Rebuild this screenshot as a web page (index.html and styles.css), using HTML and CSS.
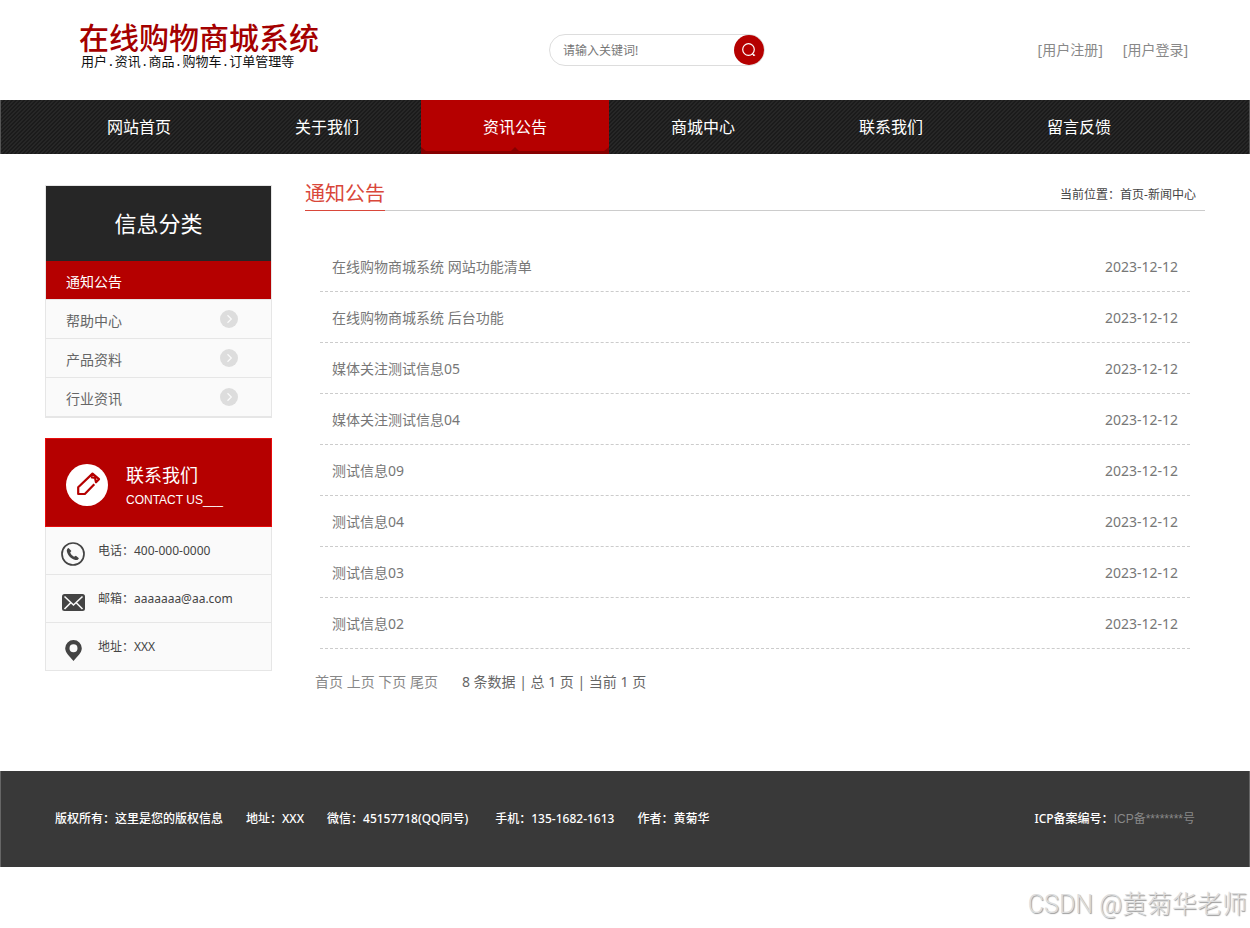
FILE: index.html
```html
<!DOCTYPE html>
<html lang="zh-CN">
<head>
<meta charset="utf-8">
<meta name="viewport" content="width=device-width, initial-scale=1">
<title>在线购物商城系统</title>
<link rel="stylesheet" href="styles.css">
</head>
<body>
<header class="header container">
  <div class="brand">
    <h1 class="brand-name">在线购物商城系统</h1>
    <p class="brand-tag">用户.资讯.商品.购物车.订单管理等</p>
  </div>
  <form class="search">
    <input class="search-input" type="text" placeholder="请输入关键词!" aria-label="请输入关键词">
    <button class="search-button" type="submit" aria-label="搜索">
      <svg width="16" height="16" viewBox="0 0 16 16" fill="none" stroke="#fff" stroke-width="1.2" stroke-linecap="round"><circle cx="7.5" cy="7.5" r="5.8"/><path d="M12.6 13.2h1"/><path d="M11.6 11.8l1 1.4"/></svg>
    </button>
  </form>
  <div class="account">
    <a href="#">[用户注册]</a>
    <a href="#">[用户登录]</a>
  </div>
</header>

<nav class="nav">
  <div class="nav-list container">
    <a class="nav-item" href="#">网站首页</a>
    <a class="nav-item" href="#">关于我们</a>
    <a class="nav-item nav-active" href="#">资讯公告
      <svg class="nav-edge" viewBox="0 0 188 7" preserveAspectRatio="none"><path fill="#870000" d="M0 0l5 4h85l4-4 4 4h85l5-4v7H0z"/></svg>
    </a>
    <a class="nav-item" href="#">商城中心</a>
    <a class="nav-item" href="#">联系我们</a>
    <a class="nav-item" href="#">留言反馈</a>
  </div>
</nav>

<div class="content container">
  <aside class="sidebar">
    <section class="category">
      <h2 class="category-title">信息分类</h2>
      <a class="category-item category-active" href="#">通知公告</a>
      <a class="category-item" href="#">帮助中心
        <svg width="18" height="18" viewBox="0 0 18 18"><circle cx="9" cy="9" r="9" fill="#ddd"/><path d="M7.5 5.2L11.3 9l-3.8 3.8" fill="none" stroke="#fafafa" stroke-width="1.3"/></svg></a>
      <a class="category-item" href="#">产品资料
        <svg width="18" height="18" viewBox="0 0 18 18"><circle cx="9" cy="9" r="9" fill="#ddd"/><path d="M7.5 5.2L11.3 9l-3.8 3.8" fill="none" stroke="#fafafa" stroke-width="1.3"/></svg></a>
      <a class="category-item" href="#">行业资讯
        <svg width="18" height="18" viewBox="0 0 18 18"><circle cx="9" cy="9" r="9" fill="#ddd"/><path d="M7.5 5.2L11.3 9l-3.8 3.8" fill="none" stroke="#fafafa" stroke-width="1.3"/></svg></a>
    </section>
    <section class="contact">
      <div class="contact-head">
        <svg width="42" height="42" viewBox="0 0 42 42"><circle cx="21" cy="21" r="21" fill="#fff"/><path d="M28.3 20.3L18.8 30H12.2V23.2L26.5 9.6L33 15.2L30 18.3L29 14L25 13.2" fill="none" stroke="#b50000" stroke-width="2.2" stroke-linejoin="round"/></svg>
        <div>
          <h2 class="contact-title">联系我们</h2>
          <p class="contact-sub">CONTACT US___</p>
        </div>
      </div>
      <div class="contact-row">
        <svg width="24" height="24" viewBox="0 0 24 24"><circle cx="12" cy="12" r="11" fill="none" stroke="#444" stroke-width="1.7"/><path d="M7.600 6c-1.500.6-2.100 2-1.700 3.600 1 4.200 4.300 7.400 8.500 8.400 1.600.3 2.900-.3 3.500-1.800l-3-2.500-1.900 1c-1.800-.9-3.100-2.300-3.800-4.100l1.200-1.700z" fill="#444"/></svg>
        <span>电话：400-000-0000</span>
      </div>
      <div class="contact-row">
        <svg width="24" height="24" viewBox="0 0 24 24"><rect x="1" y="4" width="23" height="17" rx="2.5" fill="#444"/><path d="M3.500 6.500l9 8.500 9-8.500M3.500 19l6-6M21.500 19l-6-6" fill="none" stroke="#fafafa" stroke-width="1.6"/></svg>
        <span>邮箱：aaaaaaa@aa.com</span>
      </div>
      <div class="contact-row">
        <svg width="24" height="24" viewBox="0 0 24 24"><path fill="#444" fill-rule="evenodd" d="M12.500 2a8.300 8.300 0 0 1 8.300 8.300c0 4.400-4.200 8-8.300 12.700C8.400 18.300 4.200 14.700 4.200 10.300A8.300 8.300 0 0 1 12.500 2zm0 4.300a4 4 0 1 0 0 8 4 4 0 0 0 0-8z"/></svg>
        <span>地址：XXX</span>
      </div>
    </section>
  </aside>

  <main class="main">
    <div class="main-head">
      <h2 class="main-title">通知公告</h2>
      <p class="crumbs">当前位置：<a href="#">首页</a>-<a href="#">新闻中心</a></p>
    </div>
    <ul class="news">
      <li class="news-item"><a href="#">在线购物商城系统 网站功能清单</a><time>2023-12-12</time></li>
      <li class="news-item"><a href="#">在线购物商城系统 后台功能</a><time>2023-12-12</time></li>
      <li class="news-item"><a href="#">媒体关注测试信息05</a><time>2023-12-12</time></li>
      <li class="news-item"><a href="#">媒体关注测试信息04</a><time>2023-12-12</time></li>
      <li class="news-item"><a href="#">测试信息09</a><time>2023-12-12</time></li>
      <li class="news-item"><a href="#">测试信息04</a><time>2023-12-12</time></li>
      <li class="news-item"><a href="#">测试信息03</a><time>2023-12-12</time></li>
      <li class="news-item"><a href="#">测试信息02</a><time>2023-12-12</time></li>
    </ul>
    <div class="pager">
      <div class="pager-links"><a href="#">首页</a> <a href="#">上页</a> <a href="#">下页</a> <a href="#">尾页</a></div>
      <span>8 条数据 | 总 1 页 | 当前 1 页</span>
    </div>
  </main>
</div>

<footer class="footer">
  <div class="footer-inner container">
    <span>版权所有：这里是您的版权信息</span>
    <span>地址：XXX</span>
    <span class="footer-wechat">微信：45157718(QQ同号)</span>
    <span>手机：135-1682-1613</span>
    <span>作者：黄菊华</span>
    <span class="footer-icp">ICP备案编号：<a href="#">ICP备********号</a></span>
  </div>
</footer>
<p class="watermark">CSDN @黄菊华老师</p>
</body>
</html>
```

FILE: styles.css
```css
* {
  box-sizing: border-box;
}

body {
  margin: 0;
  background: #fff;
  color: #444;
  font: 14px/20px "Noto Sans", "Noto Sans CJK SC", sans-serif;
}

h1, h2, p, ul {
  margin: 0;
  padding: 0;
  font-weight: 400;
}

a {
  color: inherit;
  text-decoration: none;
}

svg {
  display: block;
  flex: none;
}

.container {
  width: 100%;
  max-width: 1160px;
  margin: 0 auto;
}

/* Header */
.header {
  display: grid;
  grid-template-columns: 504px 216px 1fr;
  align-items: center;
  height: 100px;
}

.brand {
  padding: 0 0 8px 34px;
}

.brand-name {
  color: #a40000;
  font-size: 30px;
  font-weight: 500;
  line-height: 34px;
}

.brand-tag {
  padding-left: 2px;
  color: #111;
  font-family: "Liberation Mono", "Noto Sans CJK SC", monospace;
  font-size: 13px;
  line-height: 16px;
}

.search {
  display: flex;
  align-items: center;
  height: 32px;
  border: 1px solid #ddd;
  border-radius: 16px;
}

.search-input {
  flex: 1;
  min-width: 0;
  padding: 2px 0 0 13px;
  border: 0;
  outline: 0;
  background: none;
  font: 12px/20px "Noto Sans", "Noto Sans CJK SC", sans-serif;
}

.search-input::placeholder {
  color: #777;
}

.search-button {
  display: flex;
  align-items: center;
  justify-content: center;
  width: 30px;
  height: 30px;
  padding: 0;
  border: 0;
  border-radius: 50%;
  background: #b50000;
}

.account {
  display: flex;
  justify-content: flex-end;
  gap: 20px;
  padding-right: 17px;
  color: #888;
}

/* Navigation */
.nav {
  border: solid #555;
  border-width: 0 1px;
  background: linear-gradient(135deg, #272727 25%, #1b1b1b 25% 50%, #272727 50% 75%, #1b1b1b 75%) 0 0 / 4px 4px;
}

.nav-list {
  display: flex;
}

.nav-item {
  position: relative;
  width: 188px;
  color: #fff;
  font-size: 16px;
  line-height: 54px;
  text-align: center;
}

.nav-active {
  background: #b50000;
}

.nav-edge {
  position: absolute;
  bottom: 0;
  left: 0;
  width: 100%;
  height: 7px;
}

/* Page body */
.content {
  display: flex;
  gap: 33px;
  padding: 31px 0 79px;
}

.sidebar {
  flex: none;
  width: 227px;
}

.category {
  margin-bottom: 20px;
  border: 1px solid #e6e6e6;
  border-bottom-width: 2px;
  background: #fafafa;
}

.category-title {
  background: #262626;
  color: #fff;
  font-size: 22px;
  line-height: 75px;
  text-align: center;
}

.category-item {
  display: flex;
  align-items: center;
  justify-content: space-between;
  height: 39px;
  padding: 4px 33px 0 20px;
  border-top: 1px solid #e6e6e6;
  color: #666;
}

.category-item svg {
  margin-bottom: 4px;
}

.category-active {
  height: 38px;
  border-top: 0;
  background: #b50000;
  color: #fff;
}

.contact-head {
  display: flex;
  align-items: center;
  gap: 18px;
  height: 89px;
  padding: 4px 20px 0;
  border: 1px solid #e80c0c;
  background: #b50000;
  color: #fff;
}

.contact-title {
  padding-top: 2px;
  font-size: 18px;
  line-height: 28px;
}

.contact-sub {
  font: 12px/22px "Liberation Sans", sans-serif;
}

.contact-row {
  display: flex;
  align-items: center;
  gap: 13px;
  height: 48px;
  padding: 6px 15px 0;
  border: solid #e6e6e6;
  border-width: 0 1px 1px;
  background: #fafafa;
  font-size: 12px;
}

.contact-row span {
  padding-bottom: 6px;
}

/* News list */
.main {
  flex: 1;
  min-width: 0;
}

.main-head {
  display: flex;
  justify-content: space-between;
  height: 26px;
  border-bottom: 1px solid #ccc;
}

.main-title {
  height: 26px;
  border-bottom: 1px solid #d9473a;
  color: #d9473a;
  font-size: 20px;
  line-height: 18px;
}

.crumbs {
  padding-right: 9px;
  font-size: 12px;
}

.news {
  padding: 30px 15px 23px;
  list-style: none;
}

.news-item {
  display: flex;
  justify-content: space-between;
  padding: 16px 12px 14px;
  border-bottom: 1px dashed #ccc;
  color: #777;
}

.pager {
  display: flex;
  gap: 24px;
  padding-left: 10px;
  color: #666;
}

.pager-links {
  color: #888;
}

/* Footer */
.footer {
  border: solid #666;
  border-width: 0 1px;
  background: #393939;
  color: #fff;
  font-size: 12px;
  font-weight: 500;
}

.footer-inner {
  display: flex;
  gap: 23px;
  padding: 38px 10px;
}

.footer-wechat {
  margin-right: 4px;
}

.footer-icp {
  margin-left: auto;
}

.footer-icp a {
  color: #888;
  font-family: "Liberation Sans", "Noto Sans CJK SC", sans-serif;
  font-weight: 400;
}

.watermark {
  padding: 20px 3px 5px;
  color: #ddd;
  font-family: Roboto, "Noto Sans CJK SC", sans-serif;
  font-size: 25px;
  font-weight: 300;
  line-height: 36px;
  text-align: right;
  text-shadow: 1px 1px 1px #999;
}
```
